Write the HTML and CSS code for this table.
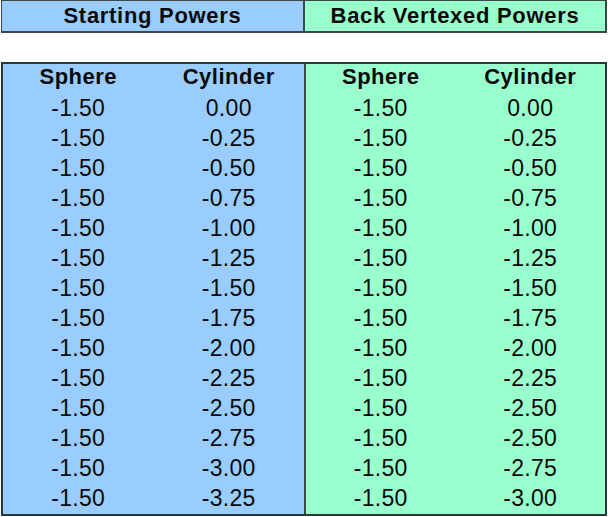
FILE: index.html
```html
<!DOCTYPE html>
<html>
<head>
<meta charset="utf-8">
<link rel="stylesheet" href="styles.css">
</head>
<body>
<div class="banner">
  <div class="cell blue">Starting Powers</div>
  <div class="cell green">Back Vertexed Powers</div>
</div>
<div class="table">
  <div class="panel blue">
    <div class="h">Sphere</div><div class="h">Cylinder</div>
    <div>-1.50</div><div>0.00</div>
    <div>-1.50</div><div>-0.25</div>
    <div>-1.50</div><div>-0.50</div>
    <div>-1.50</div><div>-0.75</div>
    <div>-1.50</div><div>-1.00</div>
    <div>-1.50</div><div>-1.25</div>
    <div>-1.50</div><div>-1.50</div>
    <div>-1.50</div><div>-1.75</div>
    <div>-1.50</div><div>-2.00</div>
    <div>-1.50</div><div>-2.25</div>
    <div>-1.50</div><div>-2.50</div>
    <div>-1.50</div><div>-2.75</div>
    <div>-1.50</div><div>-3.00</div>
    <div>-1.50</div><div>-3.25</div>
  </div>
  <div class="panel green">
    <div class="h">Sphere</div><div class="h">Cylinder</div>
    <div>-1.50</div><div>0.00</div>
    <div>-1.50</div><div>-0.25</div>
    <div>-1.50</div><div>-0.50</div>
    <div>-1.50</div><div>-0.75</div>
    <div>-1.50</div><div>-1.00</div>
    <div>-1.50</div><div>-1.25</div>
    <div>-1.50</div><div>-1.50</div>
    <div>-1.50</div><div>-1.75</div>
    <div>-1.50</div><div>-2.00</div>
    <div>-1.50</div><div>-2.25</div>
    <div>-1.50</div><div>-2.50</div>
    <div>-1.50</div><div>-2.50</div>
    <div>-1.50</div><div>-2.75</div>
    <div>-1.50</div><div>-3.00</div>
  </div>
</div>
</body>
</html>
```
FILE: styles.css
```css
html, body {
  margin: 0;
  padding: 0;
  background: #ffffff;
}
body {
  padding: 0 1px;
  font-family: "Liberation Sans", Arial, sans-serif;
  color: #0a0a0a;
}
.blue { background: #99ccff; }
.green { background: #99ffcc; }
.banner {
  display: grid;
  grid-template-columns: 301px 1fr;
  width: 606px;
  box-sizing: border-box;
  border: 1px solid #3a4848;
  border-width: 1px 2px 2px 1px;
  height: 33px;
}
.banner .cell {
  display: flex;
  align-items: center;
  justify-content: center;
  font-weight: bold;
  font-size: 22px;
  letter-spacing: 0.7px;
}
.banner .cell.green {
  border-left: 2px solid #3a4848;
}
.table {
  margin-top: 29px;
  display: grid;
  grid-template-columns: 301px 1fr;
  width: 606px;
  box-sizing: border-box;
  border: 2px solid #2c3838;
}
.panel {
  display: grid;
  grid-template-columns: 1fr 1fr;
  grid-auto-rows: 30px;
}
.panel.green {
  border-left: 2px solid #3a4848;
}
.panel div {
  display: flex;
  align-items: center;
  justify-content: center;
  font-size: 23px;
  letter-spacing: 0.3px;
  padding-bottom: 2px;
}
.panel .h {
  font-weight: bold;
  font-size: 22px;
  letter-spacing: 0.5px;
  padding-bottom: 4px;
}
```
